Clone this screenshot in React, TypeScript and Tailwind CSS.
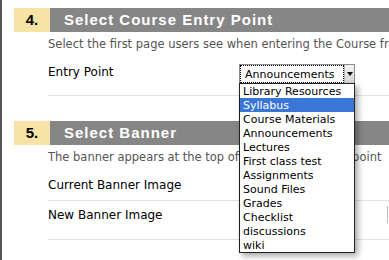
import * as React from 'react';

const options = [
    'Library Resources',
    'Syllabus',
    'Course Materials',
    'Announcements',
    'Lectures',
    'First class test',
    'Assignments',
    'Sound Files',
    'Grades',
    'Checklist',
    'discussions',
    'wiki',
];

function StepHeader({ num, title }: { num: string; title: string }) {
    return (
        <div className="ml-[12px] flex h-[24px]">
            <div className="flex w-[36px] items-center justify-center bg-[#f7e3a6] font-['Liberation_Sans',sans-serif] text-[15px] font-bold text-black">
                {num}
            </div>
            <div className="flex flex-1 items-center bg-[#868686] pl-[14px] font-['Liberation_Sans',sans-serif] text-[15px] font-bold tracking-[1px] text-white">
                {title}
            </div>
        </div>
    );
}

function EntrySelect() {
    return (
        <div className="relative h-[20px] w-[116px]">
            <div className="flex h-full w-full border border-[#8a8a8a] bg-white">
                <div className="flex flex-1 items-center border border-dotted border-black pl-[4px] text-[11px] leading-none text-black">
                    Announcements
                </div>
                <div className="flex w-[10px] items-center justify-center border-l border-[#b5b5b5] bg-gradient-to-b from-[#f4f4f4] to-[#d6d6d6]">
                    <div className="h-0 w-0 border-x-[3.5px] border-t-[4px] border-x-transparent border-t-black" />
                </div>
            </div>

            {/* open option list */}
            <div className="absolute left-0 top-[19px] z-10 w-[116px] border border-[#222] bg-white shadow-[3px_3px_6px_rgba(0,0,0,0.35)]">
                {options.map((opt) => (
                    <div
                        key={opt}
                        className={[
                            'flex h-[14px] items-center pl-[3px] text-[11px] leading-none',
                            opt === 'Syllabus' ? 'bg-[#3a76d6] text-white' : 'text-black',
                        ].join(' ')}
                    >
                        {opt}
                    </div>
                ))}
            </div>
        </div>
    );
}

export default function App() {
    return (
        <div className="h-[260px] w-[389px] overflow-hidden border-l-2 border-[#555] bg-white pt-[8px] font-['DejaVu_Sans',sans-serif]">
            <StepHeader num="4." title="Select Course Entry Point" />
            <div className="pl-[46px]">
                <p className="mt-[4px] whitespace-nowrap text-[11.5px] leading-[16px] text-[#555]">
                    Select the first page users see when entering the Course from the list below.
                </p>
                <div className="flex border-b border-[#e4e4e4] pb-[11px] pt-[12px]">
                    <div className="w-[191px] text-[12px] leading-[16px] text-black">Entry Point</div>
                    <EntrySelect />
                </div>
            </div>

            <div className="mt-[25px]">
                <StepHeader num="5." title="Select Banner" />
            </div>
            <div className="pl-[46px]">
                <p className="mt-[4px] whitespace-nowrap text-[11.5px] leading-[16px] text-[#555]">
                    The banner appears at the top of the Course's entry point
                </p>
                <div className="border-b border-[#e4e4e4] pb-[7px] pt-[12px] text-[12px] leading-[16px] text-black">
                    Current Banner Image
                </div>
                <div className="flex items-start justify-between border-b border-[#e4e4e4] pb-[16px] pt-[5px]">
                    <div className="pt-[1px] text-[12px] leading-[16px] text-black">New Banner Image</div>
                    <div className="h-[17px] w-[2px] border-l border-[#bdbdbd]" />
                </div>
            </div>
        </div>
    );
}
